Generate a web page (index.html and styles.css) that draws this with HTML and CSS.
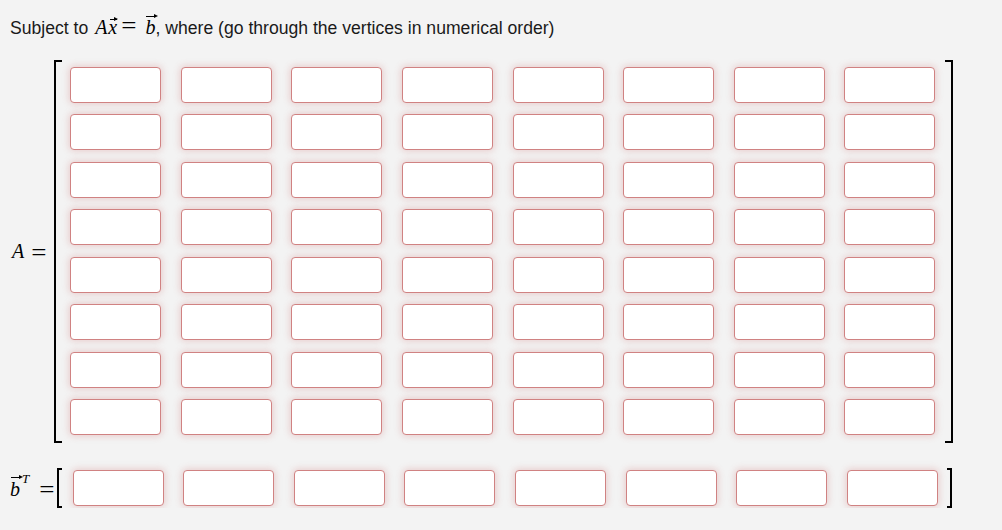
FILE: index.html
```html
<!DOCTYPE html>
<html>
<head>
<meta charset="utf-8">
<link rel="stylesheet" href="styles.css">
</head>
<body>
<p class="intro">Subject to <span class="m"><i>A</i><i class="vec vx">x</i><span class="eq">=</span><i class="vec vb">b</i></span>, where (go through the vertices in numerical order)</p>

<div class="mrow">
  <div class="label"><i>A</i><span class="eq">=</span></div>
  <div class="brk l"></div>
  <div class="grid">
    <input><input><input><input><input><input><input><input>
    <input><input><input><input><input><input><input><input>
    <input><input><input><input><input><input><input><input>
    <input><input><input><input><input><input><input><input>
    <input><input><input><input><input><input><input><input>
    <input><input><input><input><input><input><input><input>
    <input><input><input><input><input><input><input><input>
    <input><input><input><input><input><input><input><input>
  </div>
  <div class="brk r"></div>
</div>

<div class="brow">
  <div class="blabel"><i class="vec vb">b</i><sup><i>T</i></sup><span class="eq">=</span></div>
  <div class="sbrk l"></div>
  <div class="grid single">
    <input><input><input><input><input><input><input><input>
  </div>
  <div class="sbrk r"></div>
</div>
</body>
</html>
```

FILE: styles.css
```css
html, body {
  margin: 0;
  padding: 0;
  background: #f3f3f3;
}
body {
  padding: 15px 10px 0 10px;
  font-family: "Liberation Sans", Arial, sans-serif;
  font-size: 17.6px;
  color: #1a1a1a;
}
.intro {
  margin: 0;
  height: 20px;
  line-height: 20px;
  white-space: nowrap;
}
.m, .label, .blabel {
  font-family: "Liberation Serif", "DejaVu Serif", serif;
  font-size: 20px;
  color: #000;
}
.m { margin-left: 2px; }
.m i, .label i, .blabel i {
  font-style: italic;
}
.eq {
  font-style: normal;
  font-size: 27px;
  line-height: 20px;
  margin: 0 9px 0 4px;
  display: inline-block;
  transform: scaleY(0.85);
}
.vec {
  position: relative;
  display: inline-block;
}
.vec::before {
  content: "";
  position: absolute;
  left: 2px;
  right: 0px;
  top: 2px;
  height: 1px;
  background: #000;
}
.vec::after {
  content: "";
  position: absolute;
  right: -1px;
  top: 0px;
  border-left: 4px solid #000;
  border-top: 2.5px solid transparent;
  border-bottom: 2.5px solid transparent;
}
.vx { margin-left: 1px; }
.vb::before { top: -1px; left: 1px; right: -1px; }
.vb::after { top: -3px; right: -3px; }

.mrow {
  display: flex;
  align-items: stretch;
  margin-top: 25px;
}
.label {
  width: 44px;
  display: flex;
  align-items: center;
  padding-left: 2px;
  box-sizing: border-box;
}
.label .eq { margin: 0 0 0 7px; }
.brk {
  width: 6px;
  border: 2px solid #000;
}
.brk.l { border-right: none; }
.brk.r { border-left: none; margin-left: 9.7px; }
.grid {
  display: grid;
  grid-template-columns: repeat(8, 91px);
  column-gap: 19.6px;
  row-gap: 11.45px;
  padding: 7px 0 8px 0;
  margin-left: 8.3px;
}
.grid input {
  box-sizing: border-box;
  width: 91px;
  height: 36px;
  margin: 0;
  padding: 0 6px;
  background: #fff;
  border: 1px solid #d08282;
  border-radius: 4px;
  box-shadow: 0 0 7px 1px rgba(205, 110, 110, 0.3);
  outline: none;
}
.brow {
  display: flex;
  align-items: center;
  margin-top: 25px;
}
.blabel {
  width: 47px;
  display: flex;
  align-items: center;
  box-sizing: border-box;
  padding-top: 2px;
}
.blabel sup {
  font-size: 13px;
  align-self: flex-start;
  margin-top: -7px;
  margin-left: 2px;
}
.blabel .eq { margin: 0 0 0 10px; }
.sbrk {
  width: 3px;
  height: 36px;
  border: 2px solid #000;
}
.sbrk.l { border-right: none; }
.sbrk.r { border-left: none; margin-left: 9.4px; }
.grid.single {
  padding: 0;
  margin-left: 10.6px;
}
```
